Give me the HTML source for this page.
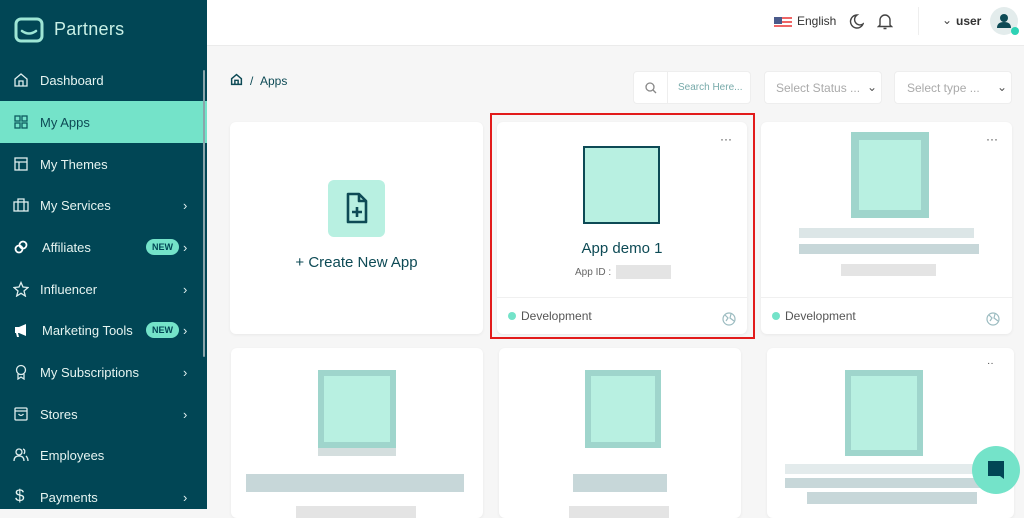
<!DOCTYPE html>
<html><head><meta charset="utf-8"><style>
*{box-sizing:border-box;margin:0;padding:0}
body{width:1024px;height:509px;overflow:hidden;background:#f6f6f6;font-family:"Liberation Sans",sans-serif;position:relative}
.sb{position:absolute;left:0;top:0;width:207px;height:509px;background:#014655;color:#e6f4f1}
.logo{position:absolute;left:14px;top:17px}
.brand{position:absolute;left:54px;top:19px;font-size:18px;color:#c9f0e6;letter-spacing:.3px}
.it{position:absolute;left:0;width:207px;height:42px;font-size:13px;display:flex;align-items:center}
.it .ic{position:absolute;left:13px;top:13px;width:16px;height:16px}
.it .tx{position:absolute;left:40px}
.it .ar{position:absolute;left:183px;font-size:13px;color:#dfeeee}
.new{position:absolute;left:146px;background:#74e3c9;color:#014655;font-size:9px;font-weight:bold;border-radius:9px;padding:3px 6px}
.act{background:#74e3c9;color:#0d4a55}
.scr{position:absolute;left:203px;top:70px;width:2px;height:287px;background:#8aa5ab;border-radius:1px}
.hd{position:absolute;left:207px;top:0;right:0;height:46px;background:#fff;border-bottom:1px solid #ebebeb}
.card{position:absolute;background:#fff;border-radius:6px;box-shadow:0 1px 3px rgba(0,0,0,.06)}
.ft{position:absolute;left:0;right:0;bottom:0;height:37px;border-top:1px solid #f0f0f0;font-size:12px;color:#555}
.dot{position:absolute;left:11px;top:14px;width:8px;height:8px;border-radius:50%;background:#74e3c9}
.box{position:absolute;background:#fff;border-radius:4px;border:1px solid #eee;font-size:12px;color:#aaa}
.blur{position:absolute;background:#b9cdd0;opacity:.8}
</style></head><body>
<div class="sb">
<svg class="logo" width="30" height="26" viewBox="0 0 30 26"><rect x="2" y="2" width="26" height="22" rx="5" fill="none" stroke="#9ee6d5" stroke-width="3"/><path d="M8 14 Q15 19 22 14" fill="none" stroke="#9ee6d5" stroke-width="2.5" stroke-linecap="round"/></svg>
<div class="brand">Partners</div>
<div class="it" style="top:59px"><svg class="ic" viewBox="0 0 16 16" fill="none" stroke="#dfeeee" stroke-width="1.3"><path d="M2 7 L8 2 L14 7 V14 H2Z M6 14 V9 H10 V14"/></svg><span class="tx">Dashboard</span></div>
<div class="it act" style="top:101px"><svg class="ic" viewBox="0 0 16 16" fill="none" stroke="#0d5a60" stroke-width="1.3"><rect x="2" y="2" width="5" height="5"/><rect x="9" y="2" width="5" height="5"/><rect x="2" y="9" width="5" height="5"/><rect x="9" y="9" width="5" height="5"/></svg><span class="tx">My Apps</span></div>
<div class="it" style="top:143px"><svg class="ic" viewBox="0 0 16 16" fill="none" stroke="#dfeeee" stroke-width="1.3"><rect x="2" y="2" width="12" height="12"/><path d="M2 6H14M6 6V14"/></svg><span class="tx">My Themes</span></div>
<div class="it" style="top:184px"><svg class="ic" viewBox="0 0 16 16" fill="none" stroke="#dfeeee" stroke-width="1.3"><rect x="1" y="5" width="14" height="9"/><path d="M5 5V2H11V5M5 5V14M11 5V14"/></svg><span class="tx">My Services</span><span class="ar">›</span></div>
<div class="it" style="top:226px"><svg class="ic" viewBox="0 0 16 16" fill="none" stroke="#fff" stroke-width="1.8"><circle cx="6" cy="10" r="3.5"/><circle cx="10" cy="6" r="3.5"/></svg><span class="tx" style="left:42px">Affiliates</span><span class="new">NEW</span><span class="ar">›</span></div>
<div class="it" style="top:268px"><svg class="ic" viewBox="0 0 16 16" fill="none" stroke="#dfeeee" stroke-width="1.3"><path d="M8 1.5L10 6L15 6.5L11 10L12.3 15L8 12.3L3.7 15L5 10L1 6.5L6 6Z"/></svg><span class="tx">Influencer</span><span class="ar">›</span></div>
<div class="it" style="top:309px"><svg class="ic" viewBox="0 0 16 16" fill="#fff"><path d="M2 5H6L13 2V14L6 11H5L6 15H4L3 11H2Z"/></svg><span class="tx" style="left:42px">Marketing Tools</span><span class="new">NEW</span><span class="ar">›</span></div>
<div class="it" style="top:351px"><svg class="ic" viewBox="0 0 16 16" fill="none" stroke="#dfeeee" stroke-width="1.3"><circle cx="8" cy="6" r="4.5"/><path d="M5 10V15L8 13L11 15V10"/></svg><span class="tx">My Subscriptions</span><span class="ar">›</span></div>
<div class="it" style="top:393px"><svg class="ic" viewBox="0 0 16 16" fill="none" stroke="#dfeeee" stroke-width="1.3"><rect x="2" y="2" width="12" height="12" rx="1"/><path d="M2 5H14M5.5 8Q8 11 10.5 8"/></svg><span class="tx">Stores</span><span class="ar">›</span></div>
<div class="it" style="top:434px"><svg class="ic" viewBox="0 0 16 16" fill="none" stroke="#dfeeee" stroke-width="1.3"><circle cx="6" cy="5" r="3"/><path d="M1 14Q1 9 6 9Q11 9 11 14M10 2Q13 3 11 7M13 9Q15 11 15 14"/></svg><span class="tx">Employees</span></div>
<div class="it" style="top:476px"><span class="ic" style="font-size:17px;top:10px;left:15px">$</span><span class="tx">Payments</span><span class="ar">›</span></div>
<div class="scr"></div>
</div>
<div class="hd">
<svg style="position:absolute;left:567px;top:17px" width="18" height="12"><rect width="18" height="12" fill="#e66"/><rect y="2" width="18" height="2" fill="#fff"/><rect y="6" width="18" height="2" fill="#fff"/><rect y="10" width="18" height="2" fill="#fff"/><rect width="8" height="7" fill="#4a5a8a"/></svg>
<span style="position:absolute;left:590px;top:14px;font-size:12px;color:#333">English</span>
<svg style="position:absolute;left:641px;top:13px" width="16" height="17" viewBox="0 0 16 17" fill="none" stroke="#444" stroke-width="1.4"><path d="M9 2A6.5 6.5 0 1 0 15 11A5 5 0 0 1 9 2Z"/></svg>
<svg style="position:absolute;left:670px;top:12px" width="16" height="18" viewBox="0 0 16 18" fill="none" stroke="#444" stroke-width="1.4"><path d="M3 13V8A5 5 0 0 1 13 8V13L14.5 14.5H1.5Z M6.5 16.5H9.5"/></svg>
<div style="position:absolute;left:711px;top:7px;width:1px;height:28px;background:#eee"></div>
<span style="position:absolute;left:735px;top:13px;font-size:12px;color:#444">⌄</span>
<span style="position:absolute;left:749px;top:14px;font-size:12px;font-weight:bold;color:#333">user</span>
<div style="position:absolute;left:783px;top:7px;width:28px;height:28px;border-radius:50%;background:#e3ecec"><svg width="28" height="28"><circle cx="14" cy="11" r="4" fill="#0d4a55"/><path d="M7 21Q7 15 14 15Q21 15 21 21Z" fill="#0d4a55"/></svg><div style="position:absolute;left:21px;top:20px;width:8px;height:8px;border-radius:50%;background:#2ed2b5"></div></div>
</div>
<svg style="position:absolute;left:230px;top:73px" width="13" height="13" viewBox="0 0 16 16" fill="none" stroke="#0d4a55" stroke-width="1.8"><path d="M2 7L8 2L14 7V14H2Z M6 14V9H10V14"/></svg>
<span style="position:absolute;left:250px;top:74px;font-size:12px;color:#0d4a55">/ &nbsp;Apps</span>
<div class="box" style="left:633px;top:71px;width:118px;height:33px"><div style="position:absolute;left:33px;top:0;bottom:0;width:1px;background:#eee"></div><svg style="position:absolute;left:11px;top:10px" width="12" height="12" fill="none" stroke="#888" stroke-width="1.3"><circle cx="5" cy="5" r="4"/><path d="M8 8L11 11"/></svg><span style="position:absolute;left:44px;top:10px;font-size:10px;color:#7aa">Search Here...</span></div>
<div class="box" style="left:764px;top:71px;width:118px;height:33px"><span style="position:absolute;left:11px;top:9px">Select Status ...</span><span style="position:absolute;left:102px;top:8px;color:#555">⌄</span></div>
<div class="box" style="left:894px;top:71px;width:118px;height:33px"><span style="position:absolute;left:12px;top:9px">Select type ...</span><span style="position:absolute;left:102px;top:8px;color:#555">⌄</span></div>

<div class="card" style="left:230px;top:122px;width:253px;height:212px">
<div style="position:absolute;left:98px;top:58px;width:57px;height:57px;border-radius:6px;background:#b8f0e1"><svg width="57" height="57" viewBox="0 0 57 57" fill="none" stroke="#0d4a55" stroke-width="2.6" stroke-linejoin="round"><path d="M20 14H31L38 21V42H20Z M31 14V21H38 M29 27V37M24 32H34"/></svg></div>
<div style="position:absolute;left:0;right:0;top:132px;text-align:center;font-size:15px;color:#0d4a55">+ Create New App</div>
</div>
<div class="card" style="left:497px;top:122px;width:250px;height:212px">
<div style="position:absolute;left:86px;top:24px;width:77px;height:78px;background:#b8f0e1;border:2px solid #0d4a55"></div>
<span style="position:absolute;left:223px;top:10px;font-size:12px;color:#444">···</span>
<div style="position:absolute;left:0;right:0;top:118px;text-align:center;font-size:15px;color:#0d4a55">App demo 1</div>
<span style="position:absolute;left:78px;top:145px;font-size:10px;color:#666">App ID :</span><div style="position:absolute;left:119px;top:143px;width:55px;height:14px;background:#e4e4e4"></div>
<div class="ft"><div class="dot"></div><span style="position:absolute;left:24px;top:11px">Development</span><svg style="position:absolute;left:225px;top:14px" width="14" height="14" fill="none" stroke="#9bbbc0" stroke-width="1.2"><circle cx="7" cy="7" r="6"/><path d="M3 3L6 6L4 9M9 2L8 6L12 9"/></svg></div>
</div>
<div style="position:absolute;left:490px;top:113px;width:265px;height:226px;border:2px solid #e21b1b"></div>
<div class="card" style="left:761px;top:122px;width:251px;height:212px">
<div style="position:absolute;left:90px;top:10px;width:78px;height:86px;background:#b8f0e1;border:8px solid #9fd5cc"></div>
<span style="position:absolute;left:225px;top:10px;font-size:12px;color:#444">···</span>
<div class="blur" style="left:38px;top:106px;width:175px;height:10px;opacity:.5"></div>
<div class="blur" style="left:38px;top:122px;width:180px;height:10px"></div>
<div class="blur" style="left:80px;top:142px;width:95px;height:12px;background:#ddd"></div>
<div class="ft"><div class="dot"></div><span style="position:absolute;left:24px;top:11px">Development</span><svg style="position:absolute;left:225px;top:14px" width="14" height="14" fill="none" stroke="#9bbbc0" stroke-width="1.2"><circle cx="7" cy="7" r="6"/><path d="M3 3L6 6L4 9M9 2L8 6L12 9"/></svg></div>
</div>
<div class="card" style="left:231px;top:348px;width:252px;height:170px">
<div style="position:absolute;left:87px;top:22px;width:78px;height:78px;background:#b8f0e1;border:6px solid #9fd5cc"></div>
<div style="position:absolute;left:87px;top:100px;width:78px;height:8px;background:#d4dede"></div>
<div class="blur" style="left:15px;top:126px;width:218px;height:18px"></div>
<div class="blur" style="left:65px;top:158px;width:120px;height:12px;background:#ddd"></div>
</div>
<div class="card" style="left:499px;top:348px;width:242px;height:170px">
<div style="position:absolute;left:86px;top:22px;width:76px;height:78px;background:#b8f0e1;border:6px solid #9fd5cc"></div>
<div class="blur" style="left:74px;top:126px;width:94px;height:18px"></div>
<div class="blur" style="left:70px;top:158px;width:100px;height:12px;background:#ddd"></div>
</div>
<div class="card" style="left:767px;top:348px;width:247px;height:170px">
<div style="position:absolute;left:78px;top:22px;width:78px;height:86px;background:#b8f0e1;border:6px solid #9fd5cc"></div>
<div class="blur" style="left:18px;top:116px;width:215px;height:10px;opacity:.4"></div>
<div class="blur" style="left:18px;top:130px;width:215px;height:10px"></div>
<div class="blur" style="left:40px;top:144px;width:170px;height:12px"></div>
<span style="position:absolute;left:220px;top:10px;font-size:10px;color:#444">··</span>
</div>
<div style="position:absolute;left:972px;top:446px;width:48px;height:48px;border-radius:50%;background:#74e3c9"><svg style="position:absolute;left:14px;top:13px" width="20" height="22" viewBox="0 0 20 22"><path d="M2 2H18V20L14 17H2Z" fill="#014655"/></svg></div>
</body></html>
